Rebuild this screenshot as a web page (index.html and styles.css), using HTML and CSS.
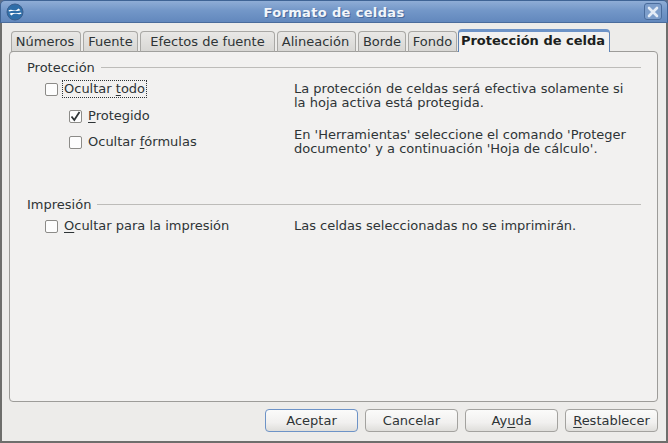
FILE: index.html
```html
<!DOCTYPE html>
<html lang="es">
<head>
    <meta charset="UTF-8">
    <title>Formato de celdas</title>
    <link rel="stylesheet" href="styles.css">
</head>
<body>
    <div class="window">
        <div class="titlebar">
            <svg class="app-icon" width="18" height="18" viewBox="0 0 18 18">
                <circle cx="9" cy="9" r="8" fill="#2f6ea8" stroke="#3b5f8e" stroke-width="1"/>
                <path d="M2.500 7.500C5 5.500 8 8.500 11 6.800L12.500 5.500 14.500 7.300C11 8.800 8 6.800 3 8.500Z" fill="#fff"/>
                <path d="M15.500 10.500C13 12.500 10 9.500 7 11.200L5.500 12.500 3.500 10.700C7 9.200 10 11.200 15 9.500Z" fill="#fff"/>
            </svg>
            <span class="title">Formato de celdas</span>
            <span class="close">
                <svg width="12" height="12" viewBox="0 0 12 12">
                    <path d="M2 2L10 10M10 2L2 10" stroke="#e4ecf6" stroke-width="2.600" stroke-linecap="round"/>
                </svg>
            </span>
        </div>
        <div class="content">
            <div class="tabs">
                <div class="tab tab-numeros">Números</div>
                <div class="tab tab-fuente">Fuente</div>
                <div class="tab tab-efectos">Efectos de fuente</div>
                <div class="tab tab-alineacion">Alineación</div>
                <div class="tab tab-borde">Borde</div>
                <div class="tab tab-fondo">Fondo</div>
                <div class="tab tab-active">Protección de celda</div>
            </div>
            <div class="panel">
                <div class="group-title"><span>Protección</span></div>
                <div class="group-body">
                    <div class="options">
                        <div class="option option-first">
                            <span class="check"></span>
                            <span class="label focused">Ocultar <u>t</u>odo</span>
                        </div>
                        <div class="option option-sub option-protegido">
                            <span class="check">
                                <svg width="11" height="11" viewBox="0 0 11 11">
                                    <path d="M1.500 5.500L4.300 9 9.500 1" fill="none" stroke="#2e3436" stroke-width="1.800"/>
                                </svg>
                            </span>
                            <span class="label"><u>P</u>rotegido</span>
                        </div>
                        <div class="option option-sub option-formulas">
                            <span class="check"></span>
                            <span class="label">Ocultar <u>f</u>órmulas</span>
                        </div>
                    </div>
                    <div class="help">
                        <p>La protección de celdas será efectiva solamente si<br>la hoja activa está protegida.</p>
                        <p class="help-second">En 'Herramientas' seleccione el comando 'Proteger<br>documento' y a continuación 'Hoja de cálculo'.</p>
                    </div>
                </div>
                <div class="group-title group-print"><span>Impresión</span></div>
                <div class="group-body">
                    <div class="options">
                        <div class="option option-print">
                            <span class="check"></span>
                            <span class="label"><u>O</u>cultar para la impresión</span>
                        </div>
                    </div>
                    <div class="help help-print">
                        <p>Las celdas seleccionadas no se imprimirán.</p>
                    </div>
                </div>
            </div>
            <div class="buttons">
                <button class="btn btn-default">Aceptar</button>
                <button class="btn">Cancelar</button>
                <button class="btn">Ay<u>u</u>da</button>
                <button class="btn"><u>R</u>establecer</button>
            </div>
        </div>
    </div>
</body>
</html>
```

FILE: styles.css
```css
html, body {
    margin: 0;
    padding: 0;
}
body {
    width: 668px;
    height: 443px;
    overflow: hidden;
    background-color: #5d6f8a;
    font-family: "DejaVu Sans", sans-serif;
    font-size: 13px;
    color: #2e3436;
}
u {
    text-underline-offset: 2px;
}
.window {
    height: 443px;
    display: flex;
    flex-direction: column;
    box-sizing: border-box;
    border-radius: 5px 5px 0 0;
    overflow: hidden;
}
.titlebar {
    height: 23px;
    flex: none;
    display: flex;
    align-items: center;
    box-sizing: border-box;
    padding: 1px 5px 0 5px;
    border: 1px solid #3f6495;
    border-bottom-color: #4a6c9c;
    border-radius: 5px 5px 0 0;
    background: linear-gradient(#8fadd6, #7397c8 45%, #6288bd);
}
.app-icon {
    flex: none;
}
.title {
    flex: 1;
    text-align: center;
    color: #f2f5fa;
    font-weight: bold;
    letter-spacing: 0.35px;
    text-shadow: 1px 1px 0 #49699a;
}
.close {
    width: 18px;
    height: 17px;
    flex: none;
    display: flex;
    align-items: center;
    justify-content: center;
    box-sizing: border-box;
    margin-top: -1px;
    border: 1px solid #4a6c9c;
    border-radius: 3px;
    background-color: #7d9ecb;
}
.content {
    flex: 1;
    display: flex;
    flex-direction: column;
    box-sizing: border-box;
    padding: 7px 8px 0 7px;
    border: 2px solid #6e6e6c;
    border-top: none;
    background-color: #edecea;
}
.tabs {
    display: flex;
    gap: 2px;
    height: 22px;
    padding-left: 2px;
    align-items: flex-end;
    position: relative;
    z-index: 1;
    margin-bottom: -1px;
}
.tab {
    box-sizing: border-box;
    height: 21px;
    line-height: 20px;
    text-align: center;
    border: 1px solid #a9a8a5;
    border-bottom-color: #a0a09d;
    border-radius: 4px 4px 0 0;
    background: linear-gradient(#e9e8e6, #d8d7d4);
}
.tab-numeros { width: 70px; padding-right: 2px; }
.tab-fuente { width: 55px; }
.tab-efectos { width: 135px; }
.tab-alineacion { width: 79px; padding-right: 2px; }
.tab-borde { width: 48px; }
.tab-fondo { width: 49px; margin-right: -1px; }
.tab-active {
    width: 152px;
    height: 23px;
    padding-right: 2px;
    font-weight: bold;
    color: #1c1f20;
    border-color: #5f84b6;
    border-top: 3px solid #6d93c7;
    border-bottom: none;
    background-color: #f2f1f0;
    background-image: none;
    line-height: 18px;
}
.panel {
    height: 351px;
    flex: none;
    box-sizing: border-box;
    padding: 7px 16px 0 17px;
    border: 1px solid #9d9c99;
    border-radius: 4px;
    background-color: #f2f1f0;
}
.group-title {
    display: flex;
    align-items: center;
    gap: 6px;
    height: 16px;
}
.group-title::after {
    content: "";
    flex: 1;
    height: 1px;
    background-color: #bdbcb9;
}
.group-print {
    margin-top: 40px;
}
.group-body {
    display: grid;
    grid-template-columns: 267px 1fr;
}
.option {
    display: flex;
    align-items: center;
    height: 16px;
    gap: 6px;
    padding-left: 18px;
}
.option-first { margin-top: 6px; }
.option-sub { padding-left: 42px; }
.option-protegido { margin-top: 11px; }
.option-formulas { margin-top: 10px; }
.option-print { margin-top: 6px; }
.check {
    box-sizing: border-box;
    width: 13px;
    height: 13px;
    flex: none;
    display: flex;
    align-items: center;
    justify-content: center;
    border: 1px solid #8c8b88;
    border-radius: 2px;
    background-color: #fdfdfd;
}
.label {
    line-height: 16px;
}
.focused {
    outline: 1px dotted #2e3436;
    outline-offset: 0;
    padding: 0 1px 0 1px;
    margin-left: -1px;
}
.help {
    margin-top: 7px;
    line-height: 14px;
}
.help p {
    margin: 0;
}
.help-second {
    padding-top: 18px;
}
.help-print {
    margin-top: 7px;
}
.buttons {
    display: flex;
    justify-content: flex-end;
    gap: 7px;
    margin-top: 7px;
}
.btn {
    box-sizing: border-box;
    width: 93px;
    height: 23px;
    padding: 0;
    font: inherit;
    color: inherit;
    border: 1px solid #a3a29f;
    border-radius: 4px;
    background: linear-gradient(#fbfbfa, #f1f0ef 60%, #dfdedb);
}
.btn-default {
    border-color: #6d93c7;
}
```
